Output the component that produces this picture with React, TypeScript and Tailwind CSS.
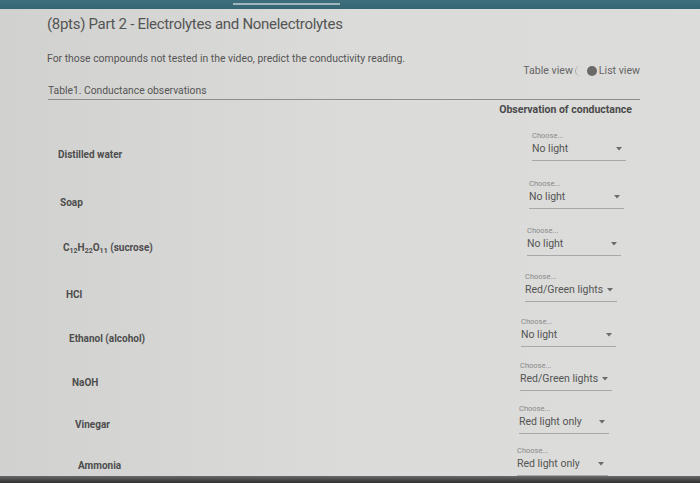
import React from 'react'

interface Row {
  label: React.ReactNode
  value: string
  labelCol: string
  dropdown: string
  labelPad: string
}

const rows: Row[] = [
  { label: 'Distilled water', value: 'No light', labelCol: 'pl-[58px] w-[532px] h-[44px]', dropdown: 'w-[94px]', labelPad: 'pb-0' },
  { label: 'Soap', value: 'No light', labelCol: 'pl-[60px] w-[529px] h-[48px]', dropdown: 'w-[95px]', labelPad: 'pb-0' },
  {
    label: (
      <span>
        C<sub className="text-[7px]">12</sub>H<sub className="text-[7px]">22</sub>O<sub className="text-[7px]">11</sub> (sucrose)
      </span>
    ),
    value: 'No light',
    labelCol: 'pl-[63px] w-[527px] h-[47px]',
    dropdown: 'w-[94px]',
    labelPad: 'pb-[2px]',
  },
  { label: 'HCl', value: 'Red/Green lights', labelCol: 'pl-[66px] w-[525px] h-[46px]', dropdown: 'w-[92px]', labelPad: 'pb-[1px]' },
  { label: 'Ethanol (alcohol)', value: 'No light', labelCol: 'pl-[69px] w-[521px] h-[45px]', dropdown: 'w-[95px]', labelPad: 'pb-[2px]' },
  { label: 'NaOH', value: 'Red/Green lights', labelCol: 'pl-[72px] w-[520px] h-[44px]', dropdown: 'w-[92px]', labelPad: 'pb-[2px]' },
  { label: 'Vinegar', value: 'Red light only', labelCol: 'pl-[75px] w-[519px] h-[43px]', dropdown: 'w-[90px]', labelPad: 'pb-[3px]' },
  { label: 'Ammonia', value: 'Red light only', labelCol: 'pl-[78px] w-[517px] h-[42px]', dropdown: 'w-[91px]', labelPad: 'pb-[4px]' },
]

function Caret() {
  return (
    <svg width="6" height="4" viewBox="0 0 6 4" className="shrink-0">
      <path d="M0 0 L6 0 L3 3.5 Z" fill="#6b6b6b" />
    </svg>
  )
}

function App() {
  return (
    <div className="h-[483px] w-[700px] flex flex-col overflow-hidden font-[Roboto,sans-serif] bg-gradient-to-r from-[#d1d1cf] via-[#dbdbd9] to-[#dcdcda]">
      <div className="h-[9px] shrink-0 bg-gradient-to-b from-[#3e6f7c] to-[#356573] pl-[233px] pt-[3px]">
        <div className="w-[107px] h-[2px] bg-[#9fb6bc]" />
      </div>

      <div className="flex-1 flex flex-col">
        <div className="pl-[47px] pt-[5px] text-[15px] leading-[20px] text-[#555] tracking-[-0.3px]">
          (8pts) Part 2 - Electrolytes and Nonelectrolytes
        </div>
        <div className="pl-[47px] mt-[18px] text-[10.4px] leading-[14px] text-[#555]">
          For those compounds not tested in the video, predict the conductivity reading.
        </div>
        <div className="flex justify-end items-center pr-[60px] -mt-[2px] h-[14px] text-[10.6px] text-[#666]">
          <span>Table view</span>
          <div className="relative w-[22px] h-[10px] mx-[2px] rounded-full border-l border-[#aaa]">
            <div className="absolute right-0 top-0 w-[10px] h-[10px] rounded-full bg-[#6a6a6a]" />
          </div>
          <span>List view</span>
        </div>
        <div className="ml-[48px] mr-[60px] mt-[6px] pb-[1px] border-b border-[#8e8e8e] text-[10.3px] leading-[14px] text-[#555]">
          Table1. Conductance observations
        </div>
        <div className="flex justify-end pr-[68px] mt-[3px] text-[10.5px] leading-[14px] font-bold text-[#4a4a4a]">
          Observation of conductance
        </div>

        {rows.map((row, i) => (
          <div key={i} className="flex items-end">
            <div className={`${row.labelCol} shrink-0 flex items-end`}>
              <div className={`${row.labelPad} text-[10px] leading-[12px] font-bold text-[#4d4d4d]`}>{row.label}</div>
            </div>
            <div className={`${row.dropdown} shrink-0 border-b border-[#a8a8a8] pb-[5px]`}>
              <div className="text-[7.5px] leading-[9px] mb-[2px] text-[#8a8a8a]">Choose...</div>
              <div className="flex items-center justify-between pr-[4px] text-[10.5px] leading-[13px] text-[#555]">
                <span>{row.value}</span>
                <Caret />
              </div>
            </div>
          </div>
        ))}
      </div>

      <div className="h-[7px] shrink-0 bg-gradient-to-b from-[#6a6a6a] to-[#2f2f2f]" />
    </div>
  )
}

export default App
